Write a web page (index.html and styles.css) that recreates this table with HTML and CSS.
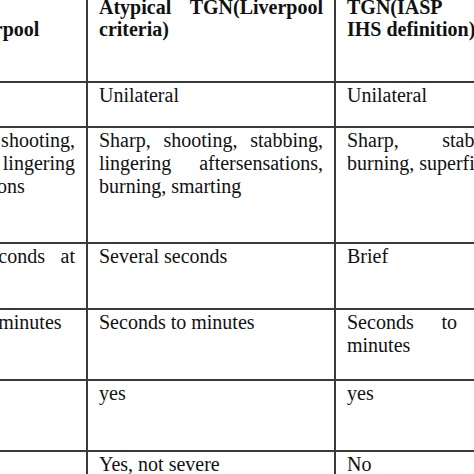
FILE: index.html
```html
<!DOCTYPE html>
<html lang="en">
<head>
<meta charset="utf-8">
<title>TGN criteria table</title>
<link rel="stylesheet" href="styles.css">
</head>
<body>
<div class="table">
  <div class="cell head">Classical TGN(Liverpool criteria)</div>
  <div class="cell head">Atypical TGN(Liverpool criteria)</div>
  <div class="cell head">TGN(IASP<br>IHS definition)</div>

  <div class="cell">Unilateral</div>
  <div class="cell">Unilateral</div>
  <div class="cell">Unilateral</div>

  <div class="cell">Sharp, shooting, stabbing, lingering aftersensations</div>
  <div class="cell">Sharp, shooting, stabbing, lingering aftersensations, burning, smarting</div>
  <div class="cell">Sharp, stabbing, burning, superficial</div>

  <div class="cell">Several seconds at most</div>
  <div class="cell">Several seconds</div>
  <div class="cell">Brief</div>

  <div class="cell">Seconds to minutes</div>
  <div class="cell">Seconds to minutes</div>
  <div class="cell">Seconds to two minutes</div>

  <div class="cell">yes</div>
  <div class="cell">yes</div>
  <div class="cell">yes</div>

  <div class="cell">Yes, severe</div>
  <div class="cell">Yes, not severe</div>
  <div class="cell">No</div>
</div>
</body>
</html>
```

FILE: styles.css
```css
html, body {
  margin: 0;
  padding: 0;
  overflow: hidden;
  background: #ffffff;
}

.table {
  display: grid;
  grid-template-columns: 191px 246px 190px;
  grid-template-rows: 86px 43px 114px 64px 69px 69px 80px;
  gap: 2px;
  width: max-content;
  margin: -7px 0 0 -107px;
  border: 2px solid #3a3a3a;
  background: #3a3a3a;
  font-family: "Liberation Serif", "Times New Roman", serif;
  font-size: 20px;
  line-height: 23px;
  color: #111111;
}

.cell {
  background: #ffffff;
  padding: 1px 11px 0;
  text-align: justify;
  overflow: hidden;
}

.head {
  font-weight: bold;
  line-height: 22px;
}
```
